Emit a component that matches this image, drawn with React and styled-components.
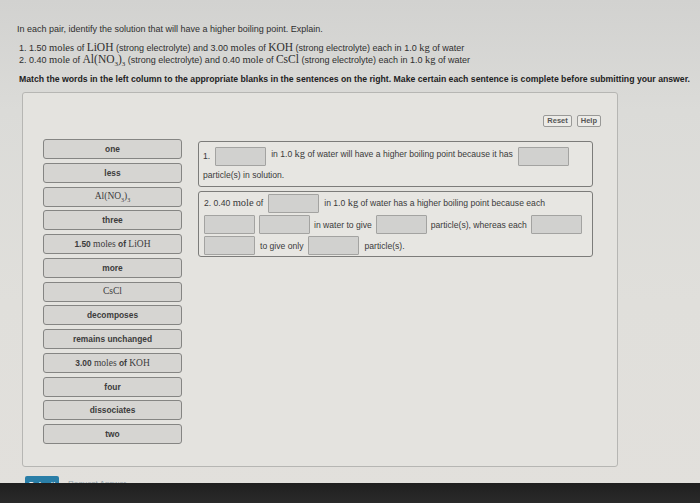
import React from 'react'
import styled, { createGlobalStyle } from 'styled-components'

const GlobalStyle = createGlobalStyle`
  html, body {
    margin: 0;
    padding: 0;
  }
  body {
    width: 700px;
    height: 503px;
    overflow: hidden;
    background: linear-gradient(to bottom, #d2d2d0 0%, #dbdbd8 22%, #e0dfdb 60%, #e2e0dc 100%);
    font-family: "Liberation Sans", Arial, sans-serif;
    color: #333;
  }
`

const Page = styled.div`
  height: 503px;
  display: flex;
  flex-direction: column;
`

const Intro = styled.div`
  padding: 23px 0 0 17px;
  font-size: 9px;
  line-height: 12px;
  color: #2f2f2f;
`

const Question = styled.p`
  margin: 0;
  height: 12px;
`

const Parts = styled.div`
  margin-top: 7px;
  padding-left: 2px;
`

const PartLine = styled.div`
  height: 12px;
  white-space: nowrap;
`

const Serif = styled.span`
  font-family: "Liberation Serif", "Times New Roman", serif;
  font-size: ${p => p.size || 10.5}px;
  font-weight: normal;
  line-height: 1;
`

const Sub = styled.sub`
  font-size: ${p => p.size || 7}px;
  line-height: 0;
`

const Instruction = styled.p`
  margin: 7px 0 0 2px;
  height: 12px;
  font-weight: bold;
  font-size: 8.7px;
  color: #222;
  white-space: nowrap;
`

const Panel = styled.section`
  box-sizing: border-box;
  margin: 7px 0 0 22px;
  width: 596px;
  height: 375px;
  padding: 22px 16px 0 20px;
  border: 1px solid #b6b6b3;
  border-radius: 3px;
  background: #e4e3df;
`

const Tools = styled.div`
  display: flex;
  justify-content: flex-end;
  gap: 5px;
`

const ToolButton = styled.button`
  box-sizing: border-box;
  height: 12px;
  padding: 0 3px;
  border: 1px solid #999997;
  border-radius: 2px;
  background: #ecebe7;
  color: #555;
  font-family: "Liberation Sans", Arial, sans-serif;
  font-weight: bold;
  font-size: 7.5px;
  line-height: 10px;
`

const Workspace = styled.div`
  display: flex;
  align-items: flex-start;
  gap: 16px;
  margin-top: 12px;
`

const Choices = styled.div`
  display: flex;
  flex-direction: column;
  gap: 3.75px;
  width: 139px;
`

const Chip = styled.div`
  box-sizing: border-box;
  height: 20px;
  display: flex;
  align-items: center;
  justify-content: center;
  border: 1.5px solid #858583;
  border-radius: 3px;
  background: #d6d5d2;
  color: #3c3c3c;
  font-weight: bold;
  font-size: 8.4px;
  white-space: nowrap;
`

const Sentences = styled.div`
  display: flex;
  flex-direction: column;
  gap: 4px;
  width: 395px;
  margin-top: 2px;
`

const SentenceBox = styled.div`
  box-sizing: border-box;
  border: 1.5px solid #7c7c7a;
  border-radius: 3px;
  background: #e7e6e2;
  padding: ${p => p.pad};
  display: flex;
  flex-direction: column;
  gap: ${p => p.gap || 0}px;
`

const Line = styled.div`
  display: flex;
  align-items: center;
  gap: ${p => p.gap || 5}px;
  height: ${p => p.h || 19}px;
  font-size: 8.6px;
  color: #3a3a3a;
  white-space: nowrap;
`

const Blank = styled.span`
  box-sizing: border-box;
  display: inline-block;
  width: 51px;
  height: 19px;
  border: 1px solid #a3a3a1;
  border-radius: 1px;
  background: #d1d1cf;
  flex-shrink: 0;
`

const Text = styled.span`
  padding-bottom: ${p => p.lift || 0}px;
`

const ActionRow = styled.div`
  display: flex;
  align-items: flex-start;
  gap: 9px;
  height: 7px;
  margin-top: 9px;
  padding-left: 25px;
  overflow: hidden;
`

const SubmitButton = styled.button`
  box-sizing: border-box;
  width: 34px;
  height: 14px;
  border: none;
  border-radius: 2px;
  background: #2a7ea7;
  color: #fff;
  font-family: "Liberation Sans", Arial, sans-serif;
  font-weight: bold;
  font-size: 8px;
  padding: 2px 0 0;
`

const RequestLink = styled.span`
  padding-top: 3px;
  color: #8f9ea6;
  font-size: 8px;
`

const Taskbar = styled.div`
  height: 20px;
  background: linear-gradient(to bottom, #1f1f1f, #2a2a2a);
`

const choices = [
  'one',
  'less',
  <Serif key="al" size={9.5}>Al(NO<Sub size={6}>3</Sub>)<Sub size={6}>3</Sub></Serif>,
  'three',
  <span key="li">1.50 <Serif size={9.5}>moles</Serif> of <Serif size={9.5}>LiOH</Serif></span>,
  'more',
  <Serif key="cs" size={9.5}>CsCl</Serif>,
  'decomposes',
  'remains unchanged',
  <span key="k">3.00 <Serif size={9.5}>moles</Serif> of <Serif size={9.5}>KOH</Serif></span>,
  'four',
  'dissociates',
  'two',
]

export default function App() {
  return (
    <>
      <GlobalStyle />
      <Page>
        <Intro>
          <Question>In each pair, identify the solution that will have a higher boiling point. Explain.</Question>
          <Parts>
            <PartLine>
              1. 1.50 <Serif>moles</Serif> of <Serif size={11.5}>LiOH</Serif> (strong electrolyte) and 3.00 <Serif>moles</Serif> of <Serif size={11.5}>KOH</Serif> (strong electrolyte) each in 1.0 <Serif>kg</Serif> of water
            </PartLine>
            <PartLine>
              2. 0.40 <Serif>mole</Serif> of <Serif size={11.5}>Al(NO<Sub>3</Sub>)<Sub>3</Sub></Serif> (strong electrolyte) and 0.40 <Serif>mole</Serif> of <Serif size={11.5}>CsCl</Serif> (strong electrolyte) each in 1.0 <Serif>kg</Serif> of water
            </PartLine>
          </Parts>
          <Instruction>
            Match the words in the left column to the appropriate blanks in the sentences on the right. Make certain each sentence is complete before submitting your answer.
          </Instruction>
        </Intro>

        <Panel>
          <Tools>
            <ToolButton>Reset</ToolButton>
            <ToolButton>Help</ToolButton>
          </Tools>
          <Workspace>
            <Choices>
              {choices.map((c, i) => (
                <Chip key={i}>{c}</Chip>
              ))}
            </Choices>
            <Sentences>
              <SentenceBox pad="4px 4px 4px 4px" gap={2}>
                <Line h={20} gap={5}>
                  <Text>1.</Text>
                  <Blank />
                  <Text lift={4}>in 1.0 <Serif>kg</Serif> of water will have a higher boiling point because it has</Text>
                  <Blank />
                </Line>
                <Line h={14}>
                  <Text>particle(s) in solution.</Text>
                </Line>
              </SentenceBox>
              <SentenceBox pad="2px 4px 1px 5px" gap={2}>
                <Line>
                  <Text>2. 0.40 <Serif>mole</Serif> of</Text>
                  <Blank />
                  <Text>in 1.0 <Serif>kg</Serif> of water has a higher boiling point because each</Text>
                </Line>
                <Line gap={4}>
                  <Blank />
                  <Blank />
                  <Text>in water to give</Text>
                  <Blank />
                  <Text>particle(s), whereas each</Text>
                  <Blank />
                </Line>
                <Line>
                  <Blank />
                  <Text>to give only</Text>
                  <Blank />
                  <Text>particle(s).</Text>
                </Line>
              </SentenceBox>
            </Sentences>
          </Workspace>
        </Panel>

        <ActionRow>
          <SubmitButton>Submit</SubmitButton>
          <RequestLink>Request Answer</RequestLink>
        </ActionRow>
        <Taskbar />
      </Page>
    </>
  )
}
